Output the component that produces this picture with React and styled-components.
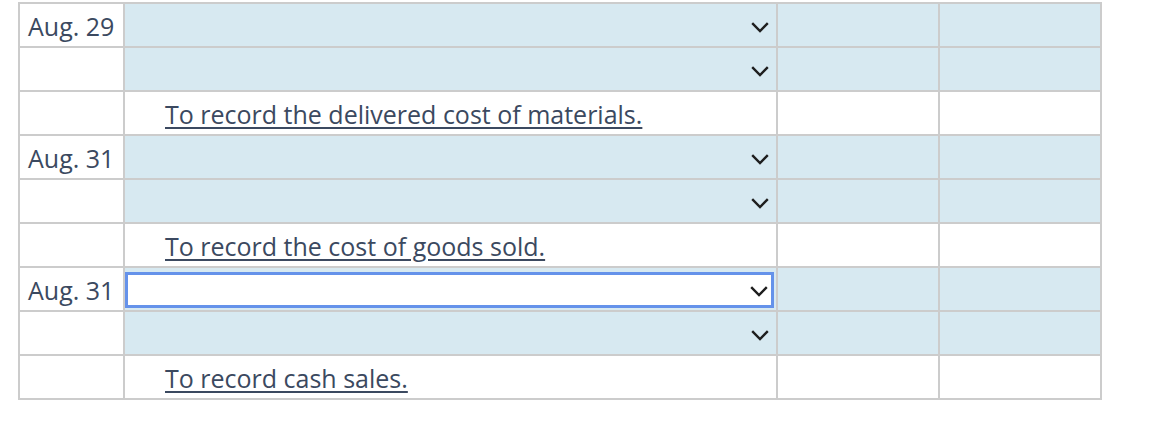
import React from "react";
import styled, { createGlobalStyle } from "styled-components";

const GlobalStyle = createGlobalStyle`
  html, body {
    margin: 0;
    padding: 0;
    background: #ffffff;
  }
  body {
    font-family: "Open Sans", "Noto Sans", sans-serif;
    color: #3b4960;
  }
`;

const entries = [
  { date: "Aug. 29", lines: 2, memo: "To record the delivered cost of materials." },
  { date: "Aug. 31", lines: 2, memo: "To record the cost of goods sold." },
  { date: "Aug. 31", lines: 2, memo: "To record cash sales.", focusFirst: true },
];

export default function App() {
  return (
    <>
      <GlobalStyle />
      <Journal>
        <colgroup>
          <col style={{ width: 103 }} />
          <col style={{ width: 651 }} />
          <col style={{ width: 160 }} />
          <col style={{ width: 160 }} />
        </colgroup>
        <tbody>
          {entries.map((entry, i) => (
            <React.Fragment key={i}>
              {Array.from({ length: entry.lines }).map((_, j) => (
                <tr key={j}>
                  <DateCell>{j === 0 ? entry.date : ""}</DateCell>
                  <InputCell>
                    <SelectBox focused={entry.focusFirst && j === 0}>
                      <Chevron />
                    </SelectBox>
                  </InputCell>
                  <InputCell />
                  <InputCell />
                </tr>
              ))}
              <tr>
                <DateCell />
                <MemoCell>
                  <Memo>{entry.memo}</Memo>
                </MemoCell>
                <PlainCell />
                <PlainCell />
              </tr>
            </React.Fragment>
          ))}
        </tbody>
      </Journal>
    </>
  );
}

function Chevron() {
  return (
    <ChevronSvg viewBox="0 0 18 11" width="18" height="11">
      <polyline points="1.2,1.2 9,9 16.8,1.2" fill="none" stroke="#1e1e1e" strokeWidth="2.4" />
    </ChevronSvg>
  );
}

const Journal = styled.table`
  margin: 2px 0 0 18px;
  width: 1084px;
  table-layout: fixed;
  border-collapse: separate;
  border-spacing: 2px;
  background: #cccccc;

  td {
    height: 42px;
    padding: 0;
    box-sizing: border-box;
  }
`;

const DateCell = styled.td`
  background: #ffffff;
  font-size: 25px;
  padding-left: 8px !important;
  padding-top: 1px !important;
  white-space: nowrap;
  color: #3b4960;
`;

const InputCell = styled.td`
  background: #d7e9f1;
`;

const PlainCell = styled.td`
  background: #ffffff;
`;

const MemoCell = styled.td`
  background: #ffffff;
  padding-left: 40px !important;
  padding-top: 1px !important;
`;

const Memo = styled.span`
  font-size: 25px;
  color: #3b4960;
  text-decoration: underline;
  text-decoration-thickness: 2px;
  text-underline-offset: 3px;
`;

const SelectBox = styled.div`
  box-sizing: border-box;
  height: ${({ focused }) => (focused ? "36px" : "42px")};
  margin: ${({ focused }) => (focused ? "4px 2px 2px 0" : "0")};
  border: ${({ focused }) => (focused ? "3px solid #6592ea" : "none")};
  background: ${({ focused }) => (focused ? "#ffffff" : "transparent")};
  display: flex;
  align-items: center;
  justify-content: flex-end;
  padding-right: ${({ focused }) => (focused ? "3px" : "7px")};
  padding-top: ${({ focused }) => (focused ? "2px" : "4px")};
`;

const ChevronSvg = styled.svg`
  display: block;
`;
